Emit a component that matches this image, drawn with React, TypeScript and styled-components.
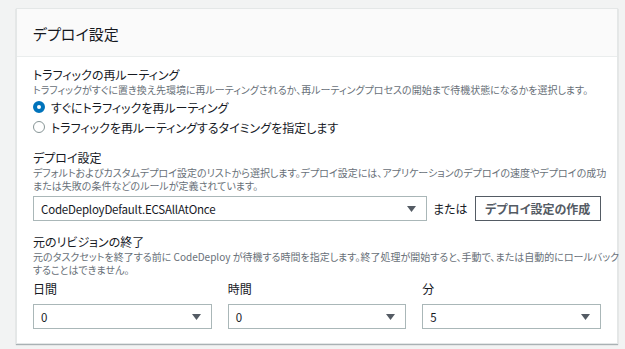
import styled, { createGlobalStyle } from 'styled-components';

const GlobalStyle = createGlobalStyle`
  html, body {
    margin: 0;
    padding: 0;
    background-color: #f2f3f3;
  }
  body {
    font-family: "Noto Sans CJK JP", "Noto Sans", sans-serif;
    font-feature-settings: "palt";
    color: #16191f;
  }
`;

/**
 * デプロイ設定パネル
 */
const App = () => {
  return (
    <>
      <GlobalStyle />
      <Page>
        <Card>
          <CardHeader>
            <HeaderTitle>デプロイ設定</HeaderTitle>
          </CardHeader>

          <CardBody>
            <Field>
              <Label>トラフィックの再ルーティング</Label>
              <Description>
                トラフィックがすぐに置き換え先環境に再ルーティングされるか、再ルーティングプロセスの開始まで待機状態になるかを選択します。
              </Description>
              <RadioGroup>
                <RadioRow>
                  <RadioMark $checked />
                  すぐにトラフィックを再ルーティング
                </RadioRow>
                <RadioRow>
                  <RadioMark />
                  トラフィックを再ルーティングするタイミングを指定します
                </RadioRow>
              </RadioGroup>
            </Field>

            <Field $gap={13}>
              <Label>デプロイ設定</Label>
              <Description>
                デフォルトおよびカスタムデプロイ設定のリストから選択します。デプロイ設定には、アプリケーションのデプロイの速度やデプロイの成功
                <br />
                または失敗の条件などのルールが定義されています。
              </Description>
              <ControlRow>
                <Select $width="394px">
                  <SelectValue>CodeDeployDefault.ECSAllAtOnce</SelectValue>
                  <Caret />
                </Select>
                <OrText>または</OrText>
                <Button>デプロイ設定の作成</Button>
              </ControlRow>
            </Field>

            <Field $gap={13}>
              <Label>元のリビジョンの終了</Label>
              <Description>
                元のタスクセットを終了する前に CodeDeploy が待機する時間を指定します。終了処理が開始すると、手動で、または自動的にロールバック
                <br />
                することはできません。
              </Description>
              <TimeGrid>
                <TimeColumn>
                  <SmallLabel>日間</SmallLabel>
                  <Select>
                    <SelectValue>0</SelectValue>
                    <Caret />
                  </Select>
                </TimeColumn>
                <TimeColumn>
                  <SmallLabel>時間</SmallLabel>
                  <Select>
                    <SelectValue>0</SelectValue>
                    <Caret />
                  </Select>
                </TimeColumn>
                <TimeColumn>
                  <SmallLabel>分</SmallLabel>
                  <Select>
                    <SelectValue>5</SelectValue>
                    <Caret />
                  </Select>
                </TimeColumn>
              </TimeGrid>
            </Field>
          </CardBody>
        </Card>
      </Page>
    </>
  );
};

const Caret = () => (
  <CaretIcon width="9" height="6" viewBox="0 0 9 6">
    <path d="M0 0h9L4.5 6z" fill="#545b64" />
  </CaretIcon>
);

const Page = styled.div`
  padding: 8px 7px 6px 16px;
`;

const Card = styled.div`
  width: 602px;
  box-sizing: border-box;
  background-color: #fff;
  border: 1px solid #e4e7e7;
  box-shadow: 0 1px 1px 0 rgba(0, 28, 36, 0.3);
`;

const CardHeader = styled.div`
  height: 47px;
  display: flex;
  align-items: center;
  padding: 0 16px;
  background-color: #fafafa;
  border-bottom: 1px solid #eaeded;
`;

const HeaderTitle = styled.h2`
  margin: 0;
  font-size: 15px;
  font-weight: 400;
  line-height: 20px;
  color: #16191f;
  padding-top: 3px;
`;

const CardBody = styled.div`
  padding: 10px 16px 14px;
`;

const Field = styled.div<{ $gap?: number }>`
  display: flex;
  flex-direction: column;
  margin-top: ${({ $gap }) => $gap ?? 0}px;
`;

const Label = styled.div`
  font-size: 12px;
  line-height: 16px;
  color: #16191f;
`;

const SmallLabel = styled(Label)`
  margin-bottom: 7px;
`;

const Description = styled.div`
  font-size: 10px;
  line-height: 13px;
  color: #687078;
  white-space: nowrap;
`;

const RadioGroup = styled.div`
  display: flex;
  flex-direction: column;
  margin-top: 1px;
`;

const RadioRow = styled.label`
  display: flex;
  align-items: center;
  gap: 6px;
  height: 20px;
  font-size: 12px;
  color: #16191f;
`;

const RadioMark = styled.span<{ $checked?: boolean }>`
  width: 12px;
  height: 12px;
  box-sizing: border-box;
  border-radius: 50%;
  flex-shrink: 0;
  border: ${({ $checked }) => ($checked ? '4px solid #0073bb' : '1px solid #879596')};
  background-color: #fff;
`;

const ControlRow = styled.div`
  display: flex;
  align-items: center;
  margin-top: 4px;
`;

const Select = styled.div<{ $width?: string }>`
  width: ${({ $width }) => $width ?? '100%'};
  flex-shrink: 0;
  height: 25px;
  box-sizing: border-box;
  display: flex;
  align-items: center;
  justify-content: space-between;
  padding: 0 10px 0 7px;
  border: 1px solid #aab7b8;
  background-color: #fff;
`;

const SelectValue = styled.span`
  font-size: 11.5px;
  letter-spacing: -0.2px;
  color: #16191f;
`;

const CaretIcon = styled.svg`
  flex-shrink: 0;
`;

const OrText = styled.span`
  margin: 0 7px 0 6px;
  font-size: 12px;
  color: #16191f;
`;

const Button = styled.button`
  flex: 1;
  height: 25px;
  box-sizing: border-box;
  border: 1px solid #545b64;
  background-color: #fff;
  font-family: inherit;
  font-feature-settings: "palt";
  font-size: 12px;
  font-weight: 700;
  color: #545b64;
  padding: 0;
  white-space: nowrap;
`;

const TimeGrid = styled.div`
  display: grid;
  grid-template-columns: repeat(3, 1fr);
  column-gap: 16px;
  margin-top: 5px;
`;

const TimeColumn = styled.div`
  display: flex;
  flex-direction: column;
`;

export default App;
